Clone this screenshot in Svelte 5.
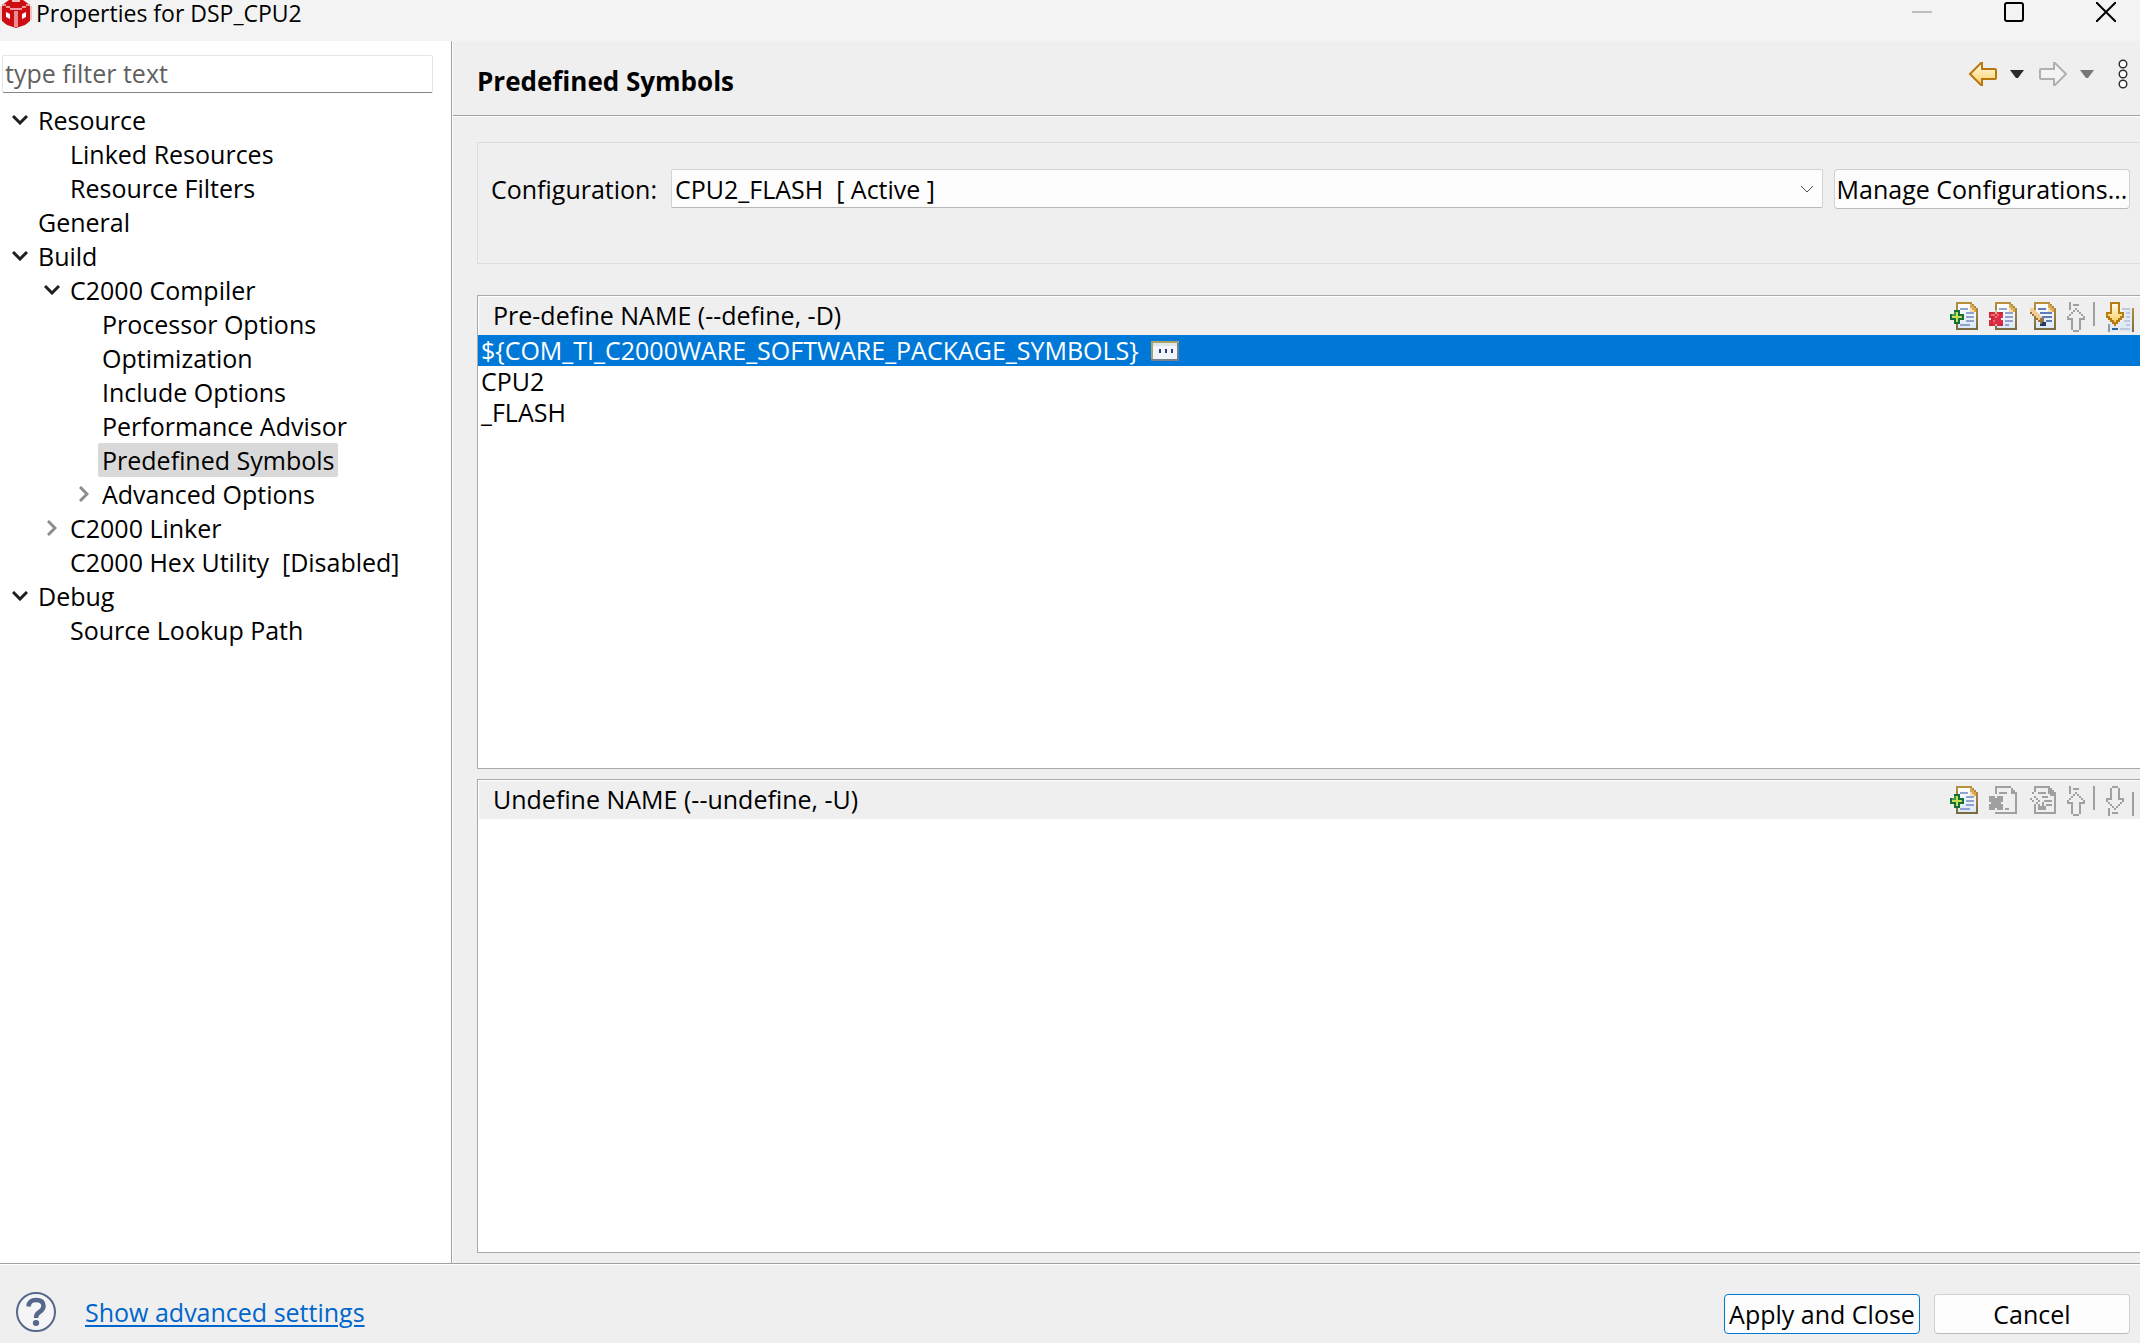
<script lang="ts">
  // Project properties dialog, "Predefined Symbols" page: title bar, page tree
  // on the left, configuration picker and the two symbol lists on the right.

  interface TreeItem {
    label: string;
    level: number;
    open?: boolean;
  }

  interface SymbolPanel {
    id: string;
    title: string;
    items: string[];
  }

  const tree: TreeItem[] = [
    { label: "Resource", level: 0, open: true },
    { label: "Linked Resources", level: 1 },
    { label: "Resource Filters", level: 1 },
    { label: "General", level: 0 },
    { label: "Build", level: 0, open: true },
    { label: "C2000 Compiler", level: 1, open: true },
    { label: "Processor Options", level: 2 },
    { label: "Optimization", level: 2 },
    { label: "Include Options", level: 2 },
    { label: "Performance Advisor", level: 2 },
    { label: "Predefined Symbols", level: 2 },
    { label: "Advanced Options", level: 2, open: false },
    { label: "C2000 Linker", level: 1, open: false },
    { label: "C2000 Hex Utility\u00a0 [Disabled]", level: 1 },
    { label: "Debug", level: 0, open: true },
    { label: "Source Lookup Path", level: 1 },
  ];

  const panels: SymbolPanel[] = [
    {
      id: "define",
      title: "Pre-define NAME (--define, -D)",
      items: ["${COM_TI_C2000WARE_SOFTWARE_PACKAGE_SYMBOLS}", "CPU2", "_FLASH"],
    },
    { id: "undefine", title: "Undefine NAME (--undefine, -U)", items: [] },
  ];

  let page = $state("Predefined Symbols");
  let filter = $state("");
  let picked: Record<string, number> = $state({ define: 0, undefine: -1 });
</script>

{#snippet sheet()}
  <path d="M3 0h8v1h1v1h1v1h1v11h-11z" fill="url(#sheet-edge)" />
  <path d="M4 1h6v4h3v8h-9z" fill="url(#sheet-fill)" />
  <path d="M10 1h1v1h1v1h1v2h-3z" fill="#dba94f" />
  <path d="M10 3h1v1h1v1h-2z" fill="#f6dfae" />
{/snippet}

{#snippet addIcon()}
  <svg class="tool-icon" viewBox="0 0 16 16" aria-hidden="true">
    {@render sheet()}
    <path d="M5 3h4v1h-4zM8 5h4v1h-4zM8 7h4v1h-4zM8 9h4v1h-4zM5 11h5v1h-5z" fill="#91a3cf" />
    <path d="M2 4h3v2h2v3h-2v2h-3v-2h-2v-3h2z" fill="#137038" />
    <path d="M2 5h2v2h2v1h-2v2h-1v-2h-2v-2h1z" fill="#3f9d4b" />
    <path d="M3 5h1v2h2v1h-2v2h-1v-2h-2v-1h2z" fill="#c9df55" />
  </svg>
{/snippet}

{#snippet deleteIcon(on: boolean)}
  <svg class="tool-icon" viewBox="0 0 16 16" aria-hidden="true">
    {#if on}
      {@render sheet()}
      <path d="M5 3h4v1h-4zM8 5h4v1h-4zM8 7h4v1h-4zM8 9h4v1h-4zM8 11h2v1h-2z" fill="#91a3cf" />
      <path d="M0 5h3v1h1v-1h3v3h-1v1h1v3h-3v-1h-1v1h-3v-3h1v-1h-1z" fill="#dd2c43" />
      <path d="M0 5h2v1h-2zM5 5h2v1h-2zM0 11h2v1h-2zM5 11h2v1h-2zM1 7h1v3h-1z" fill="#c92736" />
      <path d="M3 4h1v2h-1zM3 11h1v1h-1z" fill="#c9bd9a" />
      <path d="M1 6h2v1h-2zM4 6h1v1h-1zM2 9h1v1h-1zM3 7h1v1h-1z" fill="#ea6d78" />
    {:else}
      <path
        d="M3 0h8v1h1v1h1v1h1v11h-11v-1h10v-9h-2v-3h-7v3h-1zM5 3h4v1h-4zM8 11h2v1h-2zM0 5h3v1h1v-1h3v3h-1v1h1v3h-3v-1h-1v1h-3v-3h1v-1h-1z"
        fill="#a0a0a0"
      />
    {/if}
  </svg>
{/snippet}

{#snippet editIcon(on: boolean)}
  <svg class="tool-icon" viewBox="0 0 16 16" aria-hidden="true">
    {#if on}
      {@render sheet()}
      <path d="M5 3h4v1h-4zM6 5h6v1h-6zM7 7h5v1h-5zM9 9h3v1h-3z" fill="#5f7cbb" />
      <path d="M7 10h2v2h-2zM6 11h1v1h-1z" fill="#223a66" />
      <path d="M1 3h2v1h1v1h1v1h1v1h1v1h1v2h-1v1h-1v-1h-1v-1h-1v-1h-1v-1h-1v-1h-1z" fill="#9a7440" />
      <path d="M1 3h2v1h1v1h1v1h1v1h1v1h-1v1h-1v-1h-1v-1h-1v-1h-1v-1h-1z" fill="#f2cc93" />
    {:else}
      <path
        d="M3 0h8v1h1v1h1v1h1v11h-11v-5h1v4h9v-8h-2v-1h-1v-3h-6v2h-1zM5 3h4v1h-4zM7 5h3v1h-3zM8 7h4v1h-4zM9 9h3v1h-3zM5 10h4v2h-4zM1 6h1v1h-1zM2 7h1v1h-1zM3 5h1v1h-1zM2 3h1v1h-1zM4 6h1v1h-1zM5 7h1v1h-1zM4 8h1v1h-1zM5 9h1v1h-1zM7 8h1v2h-1z"
        fill="#a0a0a0"
      />
    {/if}
  </svg>
{/snippet}

{#snippet upIcon()}
  <svg class="tool-icon" viewBox="0 0 16 16" aria-hidden="true">
    <path
      d="M1 0h1v4h-1zM3 1h3v1h-3zM13 0h1v12h-1zM4 3h1v1h-1zM3 4h1v1h-1zM5 4h1v1h-1zM2 5h1v1h-1zM6 5h1v1h-1zM1 6h1v1h-1zM7 6h1v1h-1zM0 7h1v2h-1zM8 7h1v2h-1zM1 8h2v6h-1v-5h-1zM6 8h2v1h-1v5h-1zM3 14h3v1h-3z"
      fill="#a0a0a0"
    />
  </svg>
{/snippet}

{#snippet downIcon(on: boolean)}
  <svg class="tool-icon" viewBox="0 0 16 16" aria-hidden="true">
    {#if on}
      <path d="M2 10h7v-7h4v12h-11z" fill="#e2eaf6" />
      <path d="M13 3h1v12h-1z" fill="url(#sheet-edge)" />
      <path d="M1 11h1v4h-1z" fill="#8f9bab" />
      <path d="M8 3h4v1h-4zM10 5h2v1h-2zM10 7h2v1h-2zM9 9h3v1h-3zM10 11h2v1h-2zM7 13h5v1h-5z" fill="#bcc7e0" />
      <path d="M3 13h3v1h-3z" fill="#2b669c" />
      <path d="M2 0h5v5h2v3h-1v1h-1v1h-1v1h-1v1h-1v-1h-1v-1h-1v-1h-1v-1h-1v-3h2z" fill="#b97a14" />
      <path d="M3 1h3v5h2v1h-1v1h-1v1h-1v1h-1v-1h-1v-1h-1v-1h-1v-1h2z" fill="url(#arrow-fill)" />
    {:else}
      <path
        d="M3 0h3v1h-3zM2 1h1v6h-2v-1h1zM6 1h1v5h1v1h-2zM0 6h1v2h-1zM8 6h1v2h-1zM1 8h1v1h-1zM7 8h1v1h-1zM2 9h1v1h-1zM6 9h1v1h-1zM3 10h1v1h-1zM5 10h1v1h-1zM4 11h1v1h-1zM1 11h1v4h-1zM3 13h3v1h-3zM13 3h1v12h-1z"
        fill="#a0a0a0"
      />
    {/if}
  </svg>
{/snippet}

<!-- Shared gradients for the toolbar icons -->
<svg class="defs" width="0" height="0" aria-hidden="true">
  <defs>
    <linearGradient id="sheet-edge" x1="0" y1="0" x2="0" y2="1">
      <stop offset="0" stop-color="#bb9138" />
      <stop offset="1" stop-color="#776a42" />
    </linearGradient>
    <linearGradient id="sheet-fill" x1="0" y1="0" x2="0" y2="1">
      <stop offset="0" stop-color="#ffffff" />
      <stop offset="1" stop-color="#dbe7f8" />
    </linearGradient>
    <linearGradient id="arrow-fill" x1="0" y1="0" x2="0" y2="1">
      <stop offset="0" stop-color="#fffbe6" />
      <stop offset="1" stop-color="#fbcf62" />
    </linearGradient>
  </defs>
</svg>

<div class="dialog">
  <header class="titlebar">
    <svg class="app-icon" width="32" height="28" viewBox="0 0 32 28" aria-hidden="true">
      <path d="M2 5 9 0H23L30 5V21L25 25L16 28L7 25L2 21z" fill="#cc0d12" />
      <path d="M14 11h4v16h-4z" fill="#ea8d90" />
      <path d="M2 4h4v2H2zM26 4h4v2h-4zM6 6h4v2H6zM22 6h4v2h-4zM10 8h12v2H10z" fill="#ee9a9d" />
      <path d="M12 0h8v2h-8z" fill="#f4bfc1" />
      <path d="M6 12l4 2v5l-4-2zM26 12l-4 2v5l4-2z" fill="#fff" />
      <path d="M0 6h2v14H0zM30 6h2v14h-2z" fill="#f3c3c5" />
    </svg>
    <h1>Properties for DSP_CPU2</h1>
    <div class="window-buttons">
      <button aria-label="Minimize" disabled>
        <svg width="20" height="20" viewBox="0 0 20 20"><path d="M0 10h20" stroke="#bfbfbf" stroke-width="2" /></svg>
      </button>
      <button aria-label="Maximize">
        <svg width="20" height="20" viewBox="0 0 20 20">
          <rect x="1" y="1" width="18" height="18" rx="2" fill="none" stroke="#000" stroke-width="2" />
        </svg>
      </button>
      <button aria-label="Close">
        <svg width="20" height="20" viewBox="0 0 20 20"><path d="M0 0 20 20M20 0 0 20" stroke="#000" stroke-width="2" /></svg>
      </button>
    </div>
  </header>

  <div class="body">
    <nav class="pages" aria-label="Property pages">
      <input class="filter" type="text" aria-label="Filter pages" placeholder="type filter text" bind:value={filter} />
      <ul class="tree">
        {#each tree as item (item.label)}
          <li style="padding-left: {item.level * 32}px">
            <span class="twisty">
              {#if item.open === true}
                <svg width="16" height="10" viewBox="0 0 16 10" aria-hidden="true">
                  <path d="M1 1 8 8 15 1" fill="none" stroke="#1f1f1f" stroke-width="3" />
                </svg>
              {:else if item.open === false}
                <svg width="10" height="16" viewBox="0 0 10 16" aria-hidden="true">
                  <path d="M1 1 8 8 1 15" fill="none" stroke="#8c8c8c" stroke-width="3" />
                </svg>
              {/if}
            </span>
            <button
              class="tree-label"
              class:tree-label--active={item.label === page}
              onclick={() => (page = item.label)}>{item.label}</button
            >
          </li>
        {/each}
      </ul>
    </nav>

    <main class="page">
      <div class="page-head">
        <h2>{page}</h2>
        <div class="history">
          <button aria-label="Back">
            <svg width="30" height="26" viewBox="0 0 30 26">
              <path
                d="M2 13 13 2H14V8H27Q28 8 28 9V17Q28 18 27 18H14V24H13Z"
                fill="url(#arrow-fill)"
                stroke="#b8770f"
                stroke-width="2"
              />
            </svg>
          </button>
          <button class="drop" aria-label="Back history">
            <svg width="14" height="8" viewBox="0 0 14 8"><path d="M0 0H14L8 8H6z" fill="#2b2b2b" /></svg>
          </button>
          <button aria-label="Forward" disabled>
            <svg width="30" height="26" viewBox="0 0 30 26">
              <path
                d="M28 13 17 2H16V8H3Q2 8 2 9V17Q2 18 3 18H16V24H17Z"
                fill="#f4f4f4"
                stroke="#b0b0b0"
                stroke-width="2"
              />
            </svg>
          </button>
          <button class="drop" aria-label="Forward history" disabled>
            <svg width="14" height="8" viewBox="0 0 14 8"><path d="M0 0H14L8 8H6z" fill="#75777a" /></svg>
          </button>
          <button class="more" aria-label="View menu">
            <svg width="10" height="30" viewBox="0 0 10 30">
              <g fill="#fff" stroke="#2b2b2b" stroke-width="1.4">
                <circle cx="5" cy="5" r="3.8" />
                <circle cx="5" cy="15" r="3.8" />
                <circle cx="5" cy="25" r="3.8" />
              </g>
            </svg>
          </button>
        </div>
      </div>

      <div class="page-body">
        <div class="config">
          <label for="configuration">Configuration:</label>
          <div class="combo">
            <select id="configuration">
              <option>CPU2_FLASH&nbsp; [ Active ]</option>
            </select>
            <svg width="14" height="8" viewBox="0 0 14 8" aria-hidden="true">
              <path d="M1 1 7 7 13 1" fill="none" stroke="#4a4a4a" />
            </svg>
          </div>
          <button class="btn manage">Manage Configurations...</button>
        </div>

        {#each panels as panel (panel.id)}
          {@const on = picked[panel.id] >= 0}
          <section class="panel" aria-labelledby="{panel.id}-title">
            <div class="panel-head">
              <h3 id="{panel.id}-title">{panel.title}</h3>
              <div class="tools">
                <button aria-label="Add">{@render addIcon()}</button>
                <button aria-label="Delete" disabled={!on}>{@render deleteIcon(on)}</button>
                <button aria-label="Edit" disabled={!on}>{@render editIcon(on)}</button>
                <button aria-label="Move up" disabled>{@render upIcon()}</button>
                <button aria-label="Move down" disabled={!on}>{@render downIcon(on)}</button>
              </div>
            </div>
            <ul class="symbols">
              {#each panel.items as item, i (item)}
                <li>
                  <button
                    class="symbol"
                    class:symbol--active={picked[panel.id] === i}
                    onclick={() => (picked[panel.id] = i)}
                  >
                    {item}
                    {#if item.startsWith("${")}
                      <svg width="28" height="20" viewBox="0 0 28 20" aria-hidden="true">
                        <path d="M0 0h28v20h-28z" fill="#76808c" />
                        <path d="M0 0h28v2h-26v16h-2z" fill="#aaa268" />
                        <path d="M2 2h24v16h-24z" fill="#f2f6fc" />
                        <path d="M2 2h24v3h-24z" fill="#dde8ea" />
                        <path d="M8 8h2v4h-2zM14 8h2v4h-2zM20 8h2v4h-2z" fill="#2c3f73" />
                      </svg>
                    {/if}
                  </button>
                </li>
              {/each}
            </ul>
          </section>
        {/each}
      </div>
    </main>
  </div>

  <footer class="footer">
    <button class="help" aria-label="Help">
      <svg width="40" height="40" viewBox="0 0 40 40">
        <circle cx="20" cy="20" r="19" fill="#f5f5f5" stroke="#56698c" stroke-width="2" />
        <path d="M12.500 14.500Q13 8 20 8Q27.500 8 27.500 14Q27.500 17.500 23.500 20Q20 22 20 26" fill="none" stroke="#56698c" stroke-width="4.500" />
        <ellipse cx="20" cy="31" rx="3.200" ry="3" fill="#56698c" />
      </svg>
    </button>
    <a href="#advanced">Show advanced settings</a>
    <div class="actions">
      <button class="btn btn--default">Apply and Close</button>
      <button class="btn">Cancel</button>
    </div>
  </footer>
</div>

<style>
  :global(body) {
    margin: 0;
    background: #efefef;
  }
  .dialog {
    display: flex;
    flex-direction: column;
    min-height: 100vh;
    font-family: "Open Sans", "Noto Sans", sans-serif;
    font-size: 25px;
    line-height: 34px;
    color: #000;
    background: #efefef;
  }
  .defs {
    display: block;
  }
  h1,
  h2,
  h3,
  ul {
    margin: 0;
    padding: 0;
    font: inherit;
    list-style: none;
  }
  button {
    padding: 0;
    border: none;
    background: none;
    font: inherit;
    color: inherit;
  }
  svg {
    display: block;
    flex-shrink: 0;
  }

  .titlebar {
    display: flex;
    align-items: flex-start;
    height: 41px;
    background: #f3f3f3;
  }
  .titlebar h1 {
    margin-left: 4px;
    font-size: 23px;
    line-height: 26px;
  }
  .window-buttons {
    display: flex;
    gap: 72px;
    margin-left: auto;
    padding: 2px 24px 0 0;
  }

  .body {
    display: flex;
    flex: 1;
  }
  .pages {
    box-sizing: border-box;
    flex-shrink: 0;
    width: 452px;
    padding: 14px 0 0 2px;
    border-right: 1px solid #a0a0a0;
    background: #fff;
  }
  .filter {
    box-sizing: border-box;
    display: block;
    width: 431px;
    height: 38px;
    padding: 0 2px 2px;
    border: 1px solid #e5e5e5;
    border-bottom-color: #868686;
    border-radius: 2px;
    background: #fff;
    font: inherit;
  }
  .filter::placeholder {
    color: #5f5f5f;
    opacity: 1;
  }
  .tree {
    padding-top: 10px;
  }
  .tree li {
    display: flex;
    align-items: center;
    height: 34px;
  }
  .twisty {
    display: flex;
    flex-shrink: 0;
    justify-content: center;
    width: 32px;
    padding-left: 4px;
    box-sizing: border-box;
  }
  .tree-label {
    height: 34px;
    padding: 0 4px;
    border-radius: 2px;
    line-height: 32px;
    white-space: nowrap;
  }
  .tree-label--active {
    background: #d9d9d9;
  }

  .page {
    display: flex;
    flex: 1;
    flex-direction: column;
    min-width: 0;
    border-left: 1px solid #fff;
  }
  .page-head {
    display: flex;
    align-items: center;
    justify-content: space-between;
    height: 74px;
    padding-left: 24px;
    border-bottom: 1px solid #a0a0a0;
    box-shadow: 0 1px #fff;
  }
  .page-head h2 {
    padding-top: 6px;
    font-size: 26px;
    font-weight: 700;
  }
  .history {
    display: flex;
    align-items: center;
    padding: 0 12px 8px 0;
  }
  .drop {
    padding: 0 14px 0 12px;
  }
  .more {
    padding-left: 10px;
  }

  .page-body {
    display: flex;
    flex: 1;
    flex-direction: column;
    gap: 10px;
    padding: 26px 0 10px 24px;
  }
  .config {
    box-sizing: border-box;
    display: flex;
    align-items: flex-start;
    height: 122px;
    margin-bottom: 21px;
    padding: 26px 10px 0 13px;
    border: 1px solid #dcdcdc;
    border-right: none;
  }
  .config label {
    width: 180px;
    line-height: 40px;
  }
  .combo {
    display: grid;
    flex: 1;
    align-items: center;
    margin-right: 11px;
  }
  .combo select,
  .combo svg {
    grid-area: 1 / 1;
  }
  .combo select {
    width: 100%;
    height: 39px;
    padding: 0 3px;
    border: 1px solid #d2d2d2;
    border-bottom-color: #b8b8b8;
    border-radius: 2px;
    appearance: none;
    background: #fdfdfd;
    font: inherit;
    color: inherit;
  }
  .combo svg {
    justify-self: end;
    margin-right: 9px;
    pointer-events: none;
  }
  .btn {
    box-sizing: border-box;
    width: 196px;
    height: 40px;
    border: 1px solid #d0d0d0;
    border-bottom-color: #bababa;
    border-radius: 4px;
    background: #fdfdfd;
    white-space: nowrap;
  }
  .btn--default {
    border-color: #0078d4;
  }
  .manage {
    width: 296px;
  }

  .panel {
    display: flex;
    flex: 1;
    flex-direction: column;
    border: 1px solid #a8a8a8;
    border-right: none;
    background: #fff;
  }
  .panel-head {
    display: flex;
    align-items: center;
    justify-content: space-between;
    height: 38px;
    margin: 1px 0 0 1px;
    padding: 0 2px 0 14px;
    background: #efefef;
  }
  .panel-head h3 {
    padding-bottom: 2px;
  }
  .tools {
    display: flex;
    gap: 7px;
    padding-top: 4px;
  }
  .tool-icon {
    width: 32px;
    height: 32px;
    shape-rendering: crispEdges;
  }
  .symbol {
    display: flex;
    align-items: center;
    gap: 12px;
    width: 100%;
    height: 31px;
    padding-left: 3px;
    line-height: 31px;
    white-space: nowrap;
  }
  .symbol--active {
    background: #0078d7;
    color: #fff;
  }

  .footer {
    display: flex;
    align-items: center;
    height: 79px;
    padding: 0 10px 0 16px;
    border-top: 1px solid #a0a0a0;
    box-shadow: inset 0 1px #fff;
  }
  .footer a {
    margin-left: 29px;
    padding-top: 16px;
    color: #0066cc;
    text-decoration-thickness: 2px;
    text-underline-offset: 3px;
  }
  .help {
    padding-top: 16px;
  }
  .actions {
    display: flex;
    gap: 14px;
    margin-left: auto;
    padding-top: 20px;
  }
</style>
